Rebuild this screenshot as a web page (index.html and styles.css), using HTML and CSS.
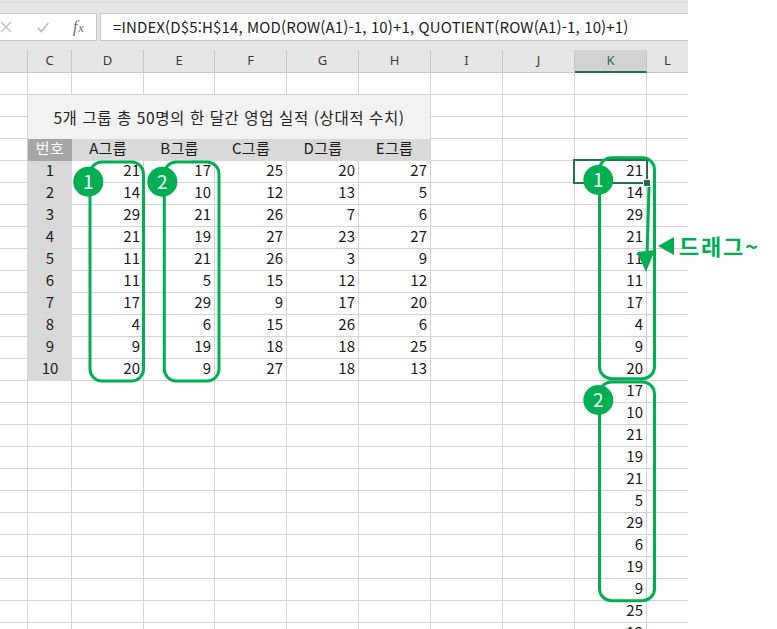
FILE: index.html
```html
<!DOCTYPE html>
<html lang="ko">
<head>
<meta charset="utf-8">
<title>INDEX 드래그</title>
<link rel="stylesheet" href="styles.css">
</head>
<body>
<div class="app">
  <header class="chrome">
    <div class="fbar">
      <div class="fbtns">
        <svg class="ico-x" width="12" height="12" viewBox="0 0 12 12"><path d="M1 1 L11 11 M11 1 L1 11" stroke="#bdbdbd" stroke-width="1.3" fill="none"/></svg>
        <svg class="ico-ok" width="12" height="11" viewBox="0 0 12 11"><path d="M0.8 5.6 L4.3 9.6 L11.3 1" fill="none" stroke="#bdbdbd" stroke-width="1.7"/></svg>
        <span class="fx"><i>f</i><i class="fxx">x</i></span>
      </div>
      <div class="formula">=INDEX(D$5:H$14, MOD(ROW(A1)-1, 10)+1, QUOTIENT(ROW(A1)-1, 10)+1)</div>
    </div>
  </header>
  <div class="colhead">
    <div class="ch w28"></div>
    <div class="ch w44">C</div>
    <div class="ch w72">D</div>
    <div class="ch w71">E</div>
    <div class="ch w72">F</div>
    <div class="ch w72">G</div>
    <div class="ch w72">H</div>
    <div class="ch w72">I</div>
    <div class="ch w72">J</div>
    <div class="ch w72 sel">K</div>
    <div class="ch w41">L</div>
  </div>
  <div class="sheet">
    <div class="title">5개 그룹 총 50명의 한 달간 영업 실적 (상대적 수치)</div>
    <div class="table">
      <div class="h0">번호</div><div class="h">A그룹</div><div class="h">B그룹</div><div class="h">C그룹</div><div class="h">D그룹</div><div class="h he">E그룹</div>
      <div class="n">1</div><div class="c">21</div><div class="c">17</div><div class="c">25</div><div class="c">20</div><div class="c">27</div>
      <div class="n">2</div><div class="c">14</div><div class="c">10</div><div class="c">12</div><div class="c">13</div><div class="c">5</div>
      <div class="n">3</div><div class="c">29</div><div class="c">21</div><div class="c">26</div><div class="c">7</div><div class="c">6</div>
      <div class="n">4</div><div class="c">21</div><div class="c">19</div><div class="c">27</div><div class="c">23</div><div class="c">27</div>
      <div class="n">5</div><div class="c">11</div><div class="c">21</div><div class="c">26</div><div class="c">3</div><div class="c">9</div>
      <div class="n">6</div><div class="c">11</div><div class="c">5</div><div class="c">15</div><div class="c">12</div><div class="c">12</div>
      <div class="n">7</div><div class="c">17</div><div class="c">29</div><div class="c">9</div><div class="c">17</div><div class="c">20</div>
      <div class="n">8</div><div class="c">4</div><div class="c">6</div><div class="c">15</div><div class="c">26</div><div class="c">6</div>
      <div class="n">9</div><div class="c">9</div><div class="c">19</div><div class="c">18</div><div class="c">18</div><div class="c">25</div>
      <div class="n">10</div><div class="c">20</div><div class="c">9</div><div class="c">27</div><div class="c">18</div><div class="c">13</div>
    </div>
    <div class="kcol">
      <div class="c">21</div><div class="c">14</div><div class="c">29</div><div class="c">21</div><div class="c">11</div>
      <div class="c">11</div><div class="c">17</div><div class="c">4</div><div class="c">9</div><div class="c">20</div>
      <div class="c">17</div><div class="c">10</div><div class="c">21</div><div class="c">19</div><div class="c">21</div>
      <div class="c">5</div><div class="c">29</div><div class="c">6</div><div class="c">19</div><div class="c">9</div>
      <div class="c">25</div><div class="c">12</div>
    </div>
  </div>
</div>

<svg class="overlay" width="777" height="629" viewBox="0 0 777 629">
  <rect x="574" y="160" width="73" height="23" fill="none" stroke="#217346" stroke-width="2"/>
  <rect x="643.5" y="179.5" width="7" height="7" fill="#217346" stroke="#ffffff" stroke-width="1"/>
  <g fill="none" stroke="#00b050" stroke-width="3">
    <rect x="90" y="162" width="53.5" height="219" rx="12"/>
    <rect x="164.3" y="162" width="54.7" height="219" rx="12"/>
    <rect x="599.5" y="157.7" width="55" height="221" rx="12"/>
    <rect x="599.5" y="382" width="55" height="218.7" rx="12"/>
    <path d="M649 187 L647 256"/>
  </g>
  <g fill="#00b050">
    <polygon points="637,252 655,250 646,272"/>
    <polygon points="658,246 674,237 674,255"/>
    <circle cx="88.3" cy="181.7" r="15"/>
    <circle cx="162.3" cy="181.7" r="15"/>
    <circle cx="598.3" cy="180" r="15"/>
    <circle cx="598.3" cy="400" r="15"/>
  </g>
  <g class="badge">
    <text x="88.3" y="188.5">1</text>
    <text x="162.3" y="188.5">2</text>
    <text x="598.3" y="187">1</text>
    <text x="598.3" y="407">2</text>
  </g>
  <text class="drag" x="679" y="255">드래그~</text>
</svg>
</body>
</html>
```

FILE: styles.css
```css
html, body {
  margin: 0;
  padding: 0;
}
body {
  width: 777px;
  height: 629px;
  overflow: hidden;
  position: relative;
  background: #ffffff;
  font-family: "Noto Sans CJK KR", "Noto Sans", sans-serif;
  color: #1a1a1a;
}
.app {
  width: 688px;
  overflow: hidden;
}
.chrome {
  background: linear-gradient(#e6e6e6 0 2px, #d8d8d8 2px 3px, #e6e6e6 3px);
  padding: 13px 0 9px;
}
.fbar {
  display: flex;
  height: 28px;
}
.fbtns {
  box-sizing: border-box;
  width: 97px;
  background: #fff;
  border: 1px solid #c6c6c6;
  border-left: none;
  display: flex;
  align-items: center;
}
.ico-x { margin-left: 0; }
.ico-ok { margin-left: 25px; }
.fx {
  margin-left: 24px;
  font-family: "Liberation Serif", serif;
  font-size: 16px;
  color: #6e6e6e;
  line-height: 1;
}
.fx i { font-style: italic; }
.fxx { font-size: 12px; margin-left: 1px; }
.formula {
  box-sizing: border-box;
  flex: 1;
  margin-left: 3px;
  background: #fff;
  border: 1px solid #c6c6c6;
  border-right: none;
  padding-left: 12px;
  font-size: 15px;
  letter-spacing: 0.13px;
  line-height: 25px;
  color: #222;
  white-space: nowrap;
}
.colhead {
  display: flex;
  height: 23px;
  background: #e6e6e6;
}
.ch {
  box-sizing: border-box;
  flex: none;
  height: 23px;
  border-right: 1px solid #c6c6c6;
  border-bottom: 1px solid #c6c6c6;
  text-align: center;
  font-family: "Noto Sans", sans-serif;
  font-size: 13px;
  line-height: 21px;
  color: #3c3c3c;
}
.ch.sel {
  background: #d2d2d2;
  border-bottom: 2px solid #217346;
  color: #217346;
}
.w28 { width: 28px; }
.w44 { width: 44px; }
.w72 { width: 72px; }
.w71 { width: 71px; }
.w41 { width: 41px; border-right: none; }

.sheet {
  display: grid;
  grid-template-columns: 28px 44px 72px 71px 72px 72px 72px 72px 72px 72px 41px;
  grid-template-rows: repeat(26, 22px);
  background-image:
    linear-gradient(to right,
      transparent 27px, #d4d4d4 27px 28px,
      transparent 28px 71px, #d4d4d4 71px 72px,
      transparent 72px 143px, #d4d4d4 143px 144px,
      transparent 144px 214px, #d4d4d4 214px 215px,
      transparent 215px 286px, #d4d4d4 286px 287px,
      transparent 287px 358px, #d4d4d4 358px 359px,
      transparent 359px 430px, #d4d4d4 430px 431px,
      transparent 431px 502px, #d4d4d4 502px 503px,
      transparent 503px 574px, #d4d4d4 574px 575px,
      transparent 575px 646px, #d4d4d4 646px 647px,
      transparent 647px),
    repeating-linear-gradient(to bottom, transparent 0 21px, #d4d4d4 21px 22px);
}
.title {
  grid-column: 2 / 8;
  grid-row: 2 / 4;
  margin-right: 1px;
  background: #f2f2f2;
  display: flex;
  align-items: center;
  justify-content: center;
  font-size: 15.5px;
  letter-spacing: 0.6px;
  color: #222;
}
.table {
  grid-column: 2 / 8;
  grid-row: 4 / 15;
  display: grid;
  grid-template-columns: 44px 72px 71px 72px 72px 72px;
  grid-auto-rows: 22px;
}
.kcol {
  grid-column: 10 / 11;
  grid-row: 5 / 27;
  display: flex;
  flex-direction: column;
}
.c, .n, .h, .h0 {
  box-sizing: border-box;
  height: 22px;
  font-size: 15px;
  line-height: 18px;
  white-space: nowrap;
}
.c {
  text-align: right;
  padding-right: 4px;
}
.n {
  background: #d9d9d9;
  text-align: center;
}
.h {
  background: #d9d9d9;
  text-align: center;
  letter-spacing: 0.3px;
}
.he { margin-right: 1px; }
.h0 {
  background: #a6a6a6;
  color: #ffffff;
  text-align: center;
  letter-spacing: 0.5px;
}

.overlay {
  position: absolute;
  left: 0;
  top: 0;
  pointer-events: none;
}
.badge text {
  font-family: "Noto Sans CJK KR", "Noto Sans", sans-serif;
  font-size: 19px;
  fill: #ffffff;
  text-anchor: middle;
}
.drag {
  font-family: "Noto Sans CJK KR", "Noto Sans", sans-serif;
  font-size: 22px;
  font-weight: 700;
  letter-spacing: 1.8px;
  fill: #00b050;
}
```
